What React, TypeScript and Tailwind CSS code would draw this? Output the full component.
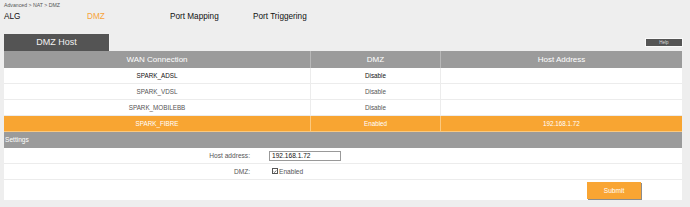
import React from "react";

const rows = [
  { wan: "SPARK_ADSL", dmz: "Disable", host: "", tone: "dark" },
  { wan: "SPARK_VDSL", dmz: "Disable", host: "", tone: "gray" },
  { wan: "SPARK_MOBILEBB", dmz: "Disable", host: "", tone: "gray" },
  { wan: "SPARK_FIBRE", dmz: "Enabled", host: "192.168.1.72", tone: "orange" },
];

export default function App() {
  return (
    <div className="w-[690px] h-[207px] overflow-hidden bg-[#eeeeee] font-['Liberation_Sans',Arial,sans-serif]">
      <div className="h-[11px] pl-[4px] pt-[2px] text-[5.2px] leading-[7px] text-[#555]">
        Advanced &gt; NAT &gt; DMZ
      </div>
      <div className="flex h-[12px] items-center text-[8.2px] leading-[10px] text-[#111]">
        <div className="w-[87px] pl-[4px]">ALG</div>
        <div className="w-[83px] text-[#f7a33a]">DMZ</div>
        <div className="w-[83px]">Port Mapping</div>
        <div className="w-[83px]">Port Triggering</div>
      </div>
      <div className="mt-[11px] flex h-[17px] items-end justify-between">
        <div className="ml-[4px] flex h-[17px] w-[106px] items-center justify-center border-r border-[#f4f4f4] bg-[#545454] text-[9px] text-[#f2f2f2]">
          DMZ Host
        </div>
        <div className="mb-[5px] mr-[8px] flex h-[7px] w-[36px] items-center justify-center bg-[#555] text-[4.5px] leading-[5px] text-[#ddd] shadow-[0_0_0_1px_#fafafa]">
          Help
        </div>
      </div>
      <div className="ml-[4px] w-[678px]">
        <div className="grid h-[17px] grid-cols-[307px_130px_241px] bg-[#9b9b9b] text-[8px] text-white">
          <div className="flex items-center justify-center border-r border-[#b8b8b8]">WAN Connection</div>
          <div className="flex items-center justify-center border-r border-[#b8b8b8]">DMZ</div>
          <div className="flex items-center justify-center">Host Address</div>
        </div>
        {rows.map((r) => {
          const bg =
            r.tone === "orange" ? "bg-[#f8a532] text-white" : "bg-white";
          const txt =
            r.tone === "dark" ? "text-[#111]" : r.tone === "gray" ? "text-[#555]" : "text-white";
          const line = r.tone === "orange" ? "border-[#fbc97f]" : "border-[#ececec]";
          return (
            <div
              key={r.wan}
              className={`grid h-[16px] grid-cols-[307px_130px_241px] border-b ${line} ${bg} ${txt} text-[6.3px]`}
            >
              <div className={`flex items-center justify-center border-r ${line}`}>{r.wan}</div>
              <div className={`flex items-center justify-center border-r ${line}`}>{r.dmz}</div>
              <div className="flex items-center justify-center">{r.host}</div>
            </div>
          );
        })}
        <div className="flex h-[16px] items-center bg-[#9b9b9b] pl-[1px] text-[6.6px] text-white">Settings</div>
        <div className="flex h-[16px] items-center border-b border-[#ececec] bg-white text-[6.6px] text-[#555]">
          <div className="w-[246px] text-right">Host address:</div>
          <div className="ml-[19px] flex h-[10px] w-[72px] items-center border border-[#999] bg-white pl-[2px] text-[6.6px] text-[#111]">
            192.168.1.72
          </div>
        </div>
        <div className="flex h-[16px] items-center border-b border-[#ececec] bg-white text-[6.6px] text-[#555]">
          <div className="w-[246px] text-right">DMZ:</div>
          <div className="ml-[22px] flex items-center">
            <span className="flex h-[6px] w-[6px] items-center justify-center border border-[#555] bg-white">
              <svg viewBox="0 0 6 6" className="h-[5px] w-[5px]">
                <path d="M1 3 L2.4 4.4 L5 1.4" fill="none" stroke="#333" strokeWidth="1" />
              </svg>
            </span>
            <span className="ml-[1px]">Enabled</span>
          </div>
        </div>
        <div className="h-[20px] bg-white pt-[2px]">
          <div className="ml-[583px] flex h-[17px] w-[54px] items-center justify-center bg-[#f9a533] text-[6.6px] text-white shadow-[1px_1px_0_#8c8c8c]">
            Submit
          </div>
        </div>
      </div>
    </div>
  );
}
